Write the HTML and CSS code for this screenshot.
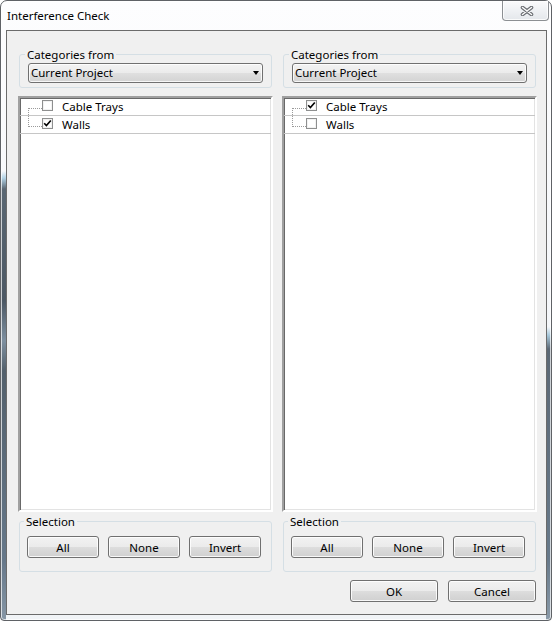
FILE: index.html
```html
<!DOCTYPE html>
<html lang="en">
  <head>
    <meta charset="UTF-8" />
    <meta name="viewport" content="width=device-width, initial-scale=1.0" />
    <title>Interference Check</title>
    <link rel="stylesheet" href="styles.css">
  </head>
  <body>
    <div class="window">
      <div class="titlebar">
        <span class="title">Interference Check</span>
        <button class="close-btn" aria-label="Close">
          <svg width="14" height="10" viewBox="0 0 14 10">
            <path d="M2.5 1.5 L11.5 8.5 M11.5 1.5 L2.5 8.5" stroke="#6a6d72" stroke-width="3.6" stroke-linecap="round" fill="none" />
            <path d="M2.5 1.5 L11.5 8.5 M11.5 1.5 L2.5 8.5" stroke="#fbfbfb" stroke-width="1.5" stroke-linecap="round" fill="none" />
          </svg>
        </button>
      </div>

      <div class="client">
        <div class="panels">
          <!-- colonne gauche -->
          <div class="panel">
            <fieldset class="group group-source">
              <legend>Categories from</legend>
              <div class="dropdown">
                <span>Current Project</span>
                <span class="dropdown-arrow"></span>
              </div>
            </fieldset>
            <ul class="tree-list">
              <li class="tree-row">
                <span class="tree-line"></span>
                <span class="check"></span>
                <span class="tree-label">Cable Trays</span>
              </li>
              <li class="tree-row">
                <span class="tree-line"></span>
                <span class="check is-checked">
                  <svg width="9" height="9" viewBox="0 0 9 9"><path d="M1.2 4.2 L3.4 6.6 L7.8 1.4" stroke="#000" stroke-width="1.6" fill="none" /></svg>
                </span>
                <span class="tree-label">Walls</span>
              </li>
            </ul>
            <fieldset class="group group-selection">
              <legend>Selection</legend>
              <div class="btn-row">
                <button class="btn">All</button>
                <button class="btn">None</button>
                <button class="btn">Invert</button>
              </div>
            </fieldset>
          </div>

          <!-- colonne droite -->
          <div class="panel">
            <fieldset class="group group-source">
              <legend>Categories from</legend>
              <div class="dropdown">
                <span>Current Project</span>
                <span class="dropdown-arrow"></span>
              </div>
            </fieldset>
            <ul class="tree-list">
              <li class="tree-row">
                <span class="tree-line"></span>
                <span class="check is-checked">
                  <svg width="9" height="9" viewBox="0 0 9 9"><path d="M1.2 4.2 L3.4 6.6 L7.8 1.4" stroke="#000" stroke-width="1.6" fill="none" /></svg>
                </span>
                <span class="tree-label">Cable Trays</span>
              </li>
              <li class="tree-row">
                <span class="tree-line"></span>
                <span class="check"></span>
                <span class="tree-label">Walls</span>
              </li>
            </ul>
            <fieldset class="group group-selection">
              <legend>Selection</legend>
              <div class="btn-row">
                <button class="btn">All</button>
                <button class="btn">None</button>
                <button class="btn">Invert</button>
              </div>
            </fieldset>
          </div>
        </div>

        <div class="dialog-buttons">
          <button class="btn btn-dialog">OK</button>
          <button class="btn btn-dialog">Cancel</button>
        </div>
      </div>
    </div>
  </body>
</html>
```

FILE: styles.css
```css
* {
  box-sizing: border-box;
}

body {
  margin: 0;
  background-color: #fff;
  font-family: 'Noto Sans', 'Liberation Sans', Arial, sans-serif;
  font-size: 11.5px;
  color: #000;
}

/* cadre de la fenetre (aero) */
.window {
  display: flex;
  flex-direction: column;
  width: 552px;
  height: 621px;
  border: 1px solid #5f6266;
  border-radius: 7px 7px 4px 4px;
  background:
    linear-gradient(180deg, rgba(0, 0, 0, 0) 170px, #b3d3e6 177px, #5a6773 188px, #4c5864 300px, #7e90a0 340px, #53606c 370px, #66788a 560px, #8797a6 620px) 0 0 / 5px 100% no-repeat,
    linear-gradient(180deg, rgba(0, 0, 0, 0) 326px, #a9cadd 334px, #5b6875 348px, #687a8b 560px, #8a9aa9 620px) 100% 0 / 5px 100% no-repeat,
    linear-gradient(180deg, #fdfdfe 0%, #f4f6f9 45%, #f1f4f7 100%);
  box-shadow: inset 0 0 0 1px rgba(255, 255, 255, 0.7);
}

.titlebar {
  display: flex;
  justify-content: space-between;
  align-items: flex-start;
  height: 29px;
  padding: 0 2px 0 6px;
}

.title {
  margin-top: 7px;
  line-height: 15px;
}

.close-btn {
  display: flex;
  align-items: center;
  justify-content: center;
  width: 47px;
  height: 20px;
  padding: 1px 0 0 2px;
  border: 1px solid #8c8f93;
  border-top: 0;
  border-radius: 0 0 4px 4px;
  background: linear-gradient(180deg, #fbfbfc 0%, #eff1f4 50%, #e4e7eb 100%);
  box-shadow: inset 0 0 0 1px rgba(255, 255, 255, 0.8);
}

.client {
  display: flex;
  flex-direction: column;
  flex: 1;
  margin: 0 4px 5px 5px;
  padding: 16px 9px 12px 11px;
  border: 1px solid #6b6b6b;
  background-color: #f0f0f0;
}

.panels {
  display: grid;
  grid-template-columns: 255px 255px;
  column-gap: 9px;
  flex: 1;
}

.panel {
  display: flex;
  flex-direction: column;
  min-height: 0;
}

/* group box */
.group {
  min-width: 0;
  margin: 0 1px;
  border: 1px solid #d5dfe5;
  border-radius: 3px;
}

.group legend {
  margin-left: -3px;
  padding: 0 2px;
  line-height: 15px;
}

.group-source {
  padding: 1px 8px 4px;
}

.group-selection {
  margin-top: 2px;
  padding: 7px 8px 13px 7px;
}

.dropdown {
  display: flex;
  justify-content: space-between;
  align-items: center;
  height: 20px;
  padding: 0 3px 1px 2px;
  border: 1px solid #707070;
  border-radius: 3px;
  background: linear-gradient(180deg, #f3f3f3 0%, #ebebeb 50%, #dfdfdf 51%, #d3d3d3 100%);
  box-shadow: inset 0 0 0 1px rgba(255, 255, 255, 0.8);
  line-height: 15px;
}

.dropdown-arrow {
  width: 0;
  height: 0;
  border-left: 3.5px solid transparent;
  border-right: 3.5px solid transparent;
  border-top: 4px solid #000;
}

/* liste des categories */
.tree-list {
  flex: 1;
  margin: 8px 0 0;
  padding: 0;
  list-style: none;
  background-color: #fff;
  border-style: solid;
  border-width: 2px;
  border-color: #a0a0a0 #fff #fff #a0a0a0;
  box-shadow: inset 1px 1px 0 #696969, inset -1px -1px 0 #e3e3e3;
}

.tree-row {
  display: flex;
  align-items: center;
  height: 18px;
  border-bottom: 1px solid #c6c6c6;
  line-height: 15px;
}

.tree-line {
  width: 14px;
  margin-left: 8px;
  border-left: 1px dotted #9a9a9a;
}

.tree-row:first-child .tree-line {
  align-self: flex-end;
  height: 7px;
  border-top: 1px dotted #9a9a9a;
}

.tree-row:last-child .tree-line {
  align-self: flex-start;
  height: 11px;
  border-bottom: 1px dotted #9a9a9a;
}

.check {
  display: flex;
  align-items: center;
  justify-content: center;
  width: 11px;
  height: 11px;
  margin-bottom: 2px;
  border: 1px solid #8e8f8f;
  background-color: #fff;
  box-shadow: inset 0 0 0 1px #f2f2f2;
}

.tree-label {
  margin-left: 9px;
}

/* boutons */
.btn-row {
  display: grid;
  grid-template-columns: repeat(3, 72px);
  column-gap: 9px;
}

.btn {
  height: 22px;
  padding: 0;
  border: 1px solid #707070;
  border-radius: 3px;
  background: linear-gradient(180deg, #f2f2f2 0%, #ebebeb 50%, #dddddd 51%, #d0d0d0 100%);
  box-shadow: inset 0 0 0 1px rgba(255, 255, 255, 0.85);
  font-family: inherit;
  font-size: inherit;
  line-height: 15px;
  color: #000;
}

.dialog-buttons {
  display: flex;
  justify-content: flex-end;
  gap: 10px;
  margin-top: 8px;
  padding-right: 1px;
}

.btn-dialog {
  width: 88px;
}
```
